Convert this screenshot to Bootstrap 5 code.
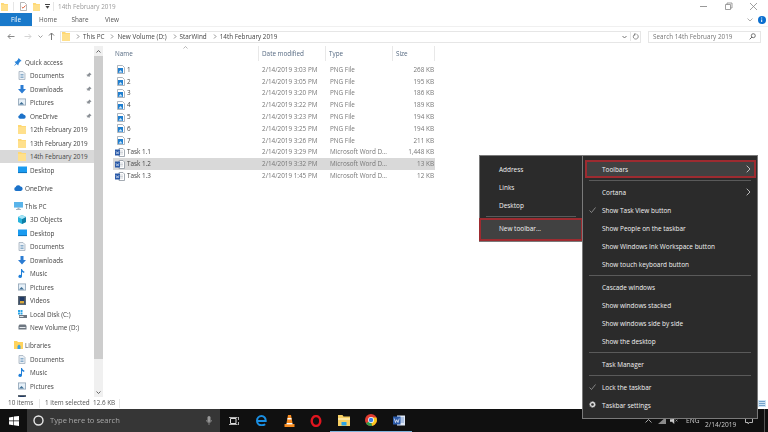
<!DOCTYPE html>
<html lang="en">
<head>
  <meta charset="UTF-8">
  <meta name="viewport" content="width=device-width, initial-scale=1.0">
  <title>14th February 2019</title>
  <link href="https://cdn.jsdelivr.net/npm/bootstrap@5.3.3/dist/css/bootstrap.min.css" rel="stylesheet">
  <script src="https://cdn.jsdelivr.net/npm/bootstrap@5.3.3/dist/js/bootstrap.bundle.min.js" defer></script>
  <style>
    html, body { height: 100%; overflow: hidden; background: #fff; }
    body { font-family: "Open Sans", "Liberation Sans", sans-serif; font-size: 6.35px; line-height: 1; color: #444; white-space: nowrap; }
    svg { display: block; flex: none; }
    .screen { width: 768px; height: 432px; filter: blur(.4px); }

    .title-row { height: 13px; color: #9a9a9a; }
    .title-row span, .addr-box span, .status-row span { padding-top: 1px; }
    .title-row .win-ctl { width: 9px; height: 9px; }
    .tab-row { height: 13px; }
    .file-tab { width: 32px; background: #1979ca; color: #fff; padding-top: 1px; }
    .rib-tab { width: 32px; color: #555; padding-top: 1px; }
    .tool-row { height: 20px; border-top: 1px solid #f0f0f0; }
    .addr-box { height: 12px; border: 1px solid #e6e6e6; color: #444; }
    .addr-main { width: 581px; margin-left: 60px; }
    .addr-main .crumb-sep { width: 4px; height: 5px; margin: 0 3px 0 6px; }
    .search-box { width: 113px; margin-left: 7px; color: #777; padding-left: 4px; }

    .body-row { height: 351px; }
    .nav-pane { width: 94px; padding-top: 9.25px; }
    .nav-item-row { height: 13.5px; padding-left: 30px; padding-top: 1.5px; color: #444; }
    .nav-item-row.head { padding-left: 25px; margin-top: 4.5px; }
    .nav-item-row.first { margin-top: 0; }
    .nav-item-row.sel { background: #d9d9d9; }
    .nav-item-row .ic { position: absolute; left: 18px; top: 2.5px; }
    .nav-item-row.head .ic { left: 14px; }
    .nav-item-row .pin { position: absolute; left: 86px; top: 3.5px; }
    .scroll-col { width: 9px; background: #f0f0f0; }
    .scroll-btn { height: 10px; }
    .scroll-thumb { height: 303px; background: #cdcdcd; }

    .files { padding-left: 10px; }
    .file-grid { display: grid; grid-template-columns: 146px 67px 67px 42px; width: 322px; }
    .file-head { height: 15px; margin-bottom: 3px; color: #566a82; }
    .file-head > div { display: flex; align-items: center; border-right: 1px solid #e8e8e8; padding-left: 3px; padding-top: 2px; }
    .file-head > div:first-child { padding-left: 2px; }
    .file-row { height: 11.8px; align-items: center; color: #777; }
    .file-row.sel { background: #d9d9d9; }
    .file-row .nm { color: #444; display: flex; align-items: center; gap: 2px; padding-left: 4px; }
    .file-row .nm.doc { padding-left: 2px; }
    .file-row .dt { padding-left: 3px; }
    .file-row .ty { padding-left: 4px; }
    .file-row .sz { text-align: right; padding-right: 1px; }
    .sort-mark { position: absolute; left: 80px; top: 0; }

    .status-row { height: 12px; color: #555; }
    .status-sep { width: 1px; height: 9px; background: #e6e6e6; }

    .taskbar { height: 23px; background: #101010; color: #d0d0d0; }
    .start-slot { width: 27px; }
    .task-search { width: 193px; background: #363636; padding: 0 8px 0 6px; color: #a8a8a8; font-size: 7.6px; }
    .task-slot { width: 27.4px; height: 100%; }
    .task-view { width: 28px; }
    .task-slot.open { border-bottom: 1px solid #7fb4dc; }
    .tray { margin-left: auto; }
    .clock-txt { font-size: 6.6px; color: #ccc; }

    .ctx-menu { position: absolute; top: 155px; background: #2b2b2b; border: 1px solid #7a7a7a; padding: 4px 0; color: #f2f2f2; font-size: 6.45px; }
    .ctx-right { left: 582px; width: 176px; }
    .ctx-left { left: 479px; width: 104px; height: 87px; }
    .ctx-row { height: 18px; padding-top: 2px; }
    .ctx-right .ctx-row { padding-left: 19px; }
    .ctx-left .ctx-row { padding-left: 19px; }
    .ctx-sep { height: 5px; display: flex; align-items: center; }
    .ctx-sep::after { content: ""; display: block; flex: 1; height: 1px; background: #5a5a5a; margin: 0 6px; }
    .ctx-hot { background: #414141; outline: 2px solid #9d2b30; outline-offset: -2px; }
    .ctx-right .ctx-hot { margin: 0 1px 0 2px; padding-left: 17px; }
    .ctx-left .ctx-hot { height: 23px; margin: -1px -1px 0 -1px; padding-left: 20px; padding-bottom: 3px; }
    .ctx-row .go { position: absolute; right: 5px; top: 5px; }
    .ctx-row .tick { position: absolute; left: 6px; top: 6px; }
  </style>
</head>
<body>
  <svg width="0" height="0" class="position-absolute">
    <defs>
      <symbol id="i-folder" viewBox="0 0 8 9"><path d="M0 0h3l1 1h4v8H0z" fill="#ffd873"/><path d="M0 2h8v7H0z" fill="#ffe08c"/></symbol>
      <symbol id="i-png" viewBox="0 0 8 9"><path d="M.5.5h5l2 2v6h-7z" fill="#fff" stroke="#9aa3ad" stroke-width=".8"/><path d="M1 3h5v5H1z" fill="#1f7fd0"/><path d="M1.5 7.5l2-2.5 2 2.5z" fill="#cfe6f7"/></symbol>
      <symbol id="i-word" viewBox="0 0 10 9"><path d="M4 .5h4l1.5 1.5v6.5H4z" fill="#fff" stroke="#8d96a0" stroke-width=".8"/><path d="M5 3h3M5 4.500h3M5 6h3" stroke="#b0b7bf" stroke-width=".6"/><path d="M0 1.500h5v6H0z" fill="#2b5aa8"/><path d="M1 3l.8 3 .7-2 .7 2L4 3" fill="none" stroke="#dfe8f6" stroke-width=".5"/></symbol>
      <symbol id="i-doc" viewBox="0 0 8 9"><path d="M1 .5h4l2 2v6H1z" fill="#e9eff5" stroke="#9aa8b6" stroke-width=".7"/><path d="M2.500 3.500h3M2.500 5h3M2.500 6.500h3" stroke="#5e8fb8" stroke-width=".7"/></symbol>
      <symbol id="i-down" viewBox="0 0 8 9"><path d="M2.500 0h3v4H8L4 8.500 0 4h2.500z" fill="#2b7cd3"/></symbol>
      <symbol id="i-pics" viewBox="0 0 8 7"><path d="M0 0h8v7H0z" fill="#8fa3b5"/><path d="M.8.800h6.400v5.400H.8z" fill="#e6f0f8"/><path d="M1 6l2.500-2.500L6 6z" fill="#3f6f95"/></symbol>
      <symbol id="i-cloud" viewBox="0 0 9 6"><path d="M2 6a2 2 0 0 1-.3-3.900A2.600 2.600 0 0 1 6.500 1.500 2.300 2.300 0 0 1 7 6z" fill="#1c72c9"/></symbol>
      <symbol id="i-desk" viewBox="0 0 9 7"><path d="M0 0h9v6.300H0z" fill="#1a9bf0"/><path d="M0 5.600h9v1H0z" fill="#0b6fb8"/></symbol>
      <symbol id="i-pc" viewBox="0 0 9 8"><path d="M0 0h9v5.600H0z" fill="#59b4ea"/><path d="M3.500 5.600h2V7h-2zM2 7h5v1H2z" fill="#a6b4c0"/></symbol>
      <symbol id="i-cube" viewBox="0 0 8 9"><path d="M4 0l4 2v5L4 9 0 7V2z" fill="#27b3dd"/><path d="M4 4l4-2v5L4 9z" fill="#0f7fa6"/><path d="M4 0l4 2-4 2-4-2z" fill="#a8e4f5"/></symbol>
      <symbol id="i-note" viewBox="0 0 7 9"><path d="M3 0h1c.3 1.500 1.500 2 2.500 2.800L6 4 4 3v4.500A1.800 1.500 0 1 1 3 6.100z" fill="#1f7fd8"/></symbol>
      <symbol id="i-video" viewBox="0 0 8 9"><path d="M0 0h8v9H0z" fill="#5a6672"/><path d="M1.500 1h5v7h-5z" fill="#203a66"/><path d="M2 5h4v2.500H2z" fill="#d9a93c"/></symbol>
      <symbol id="i-diskc" viewBox="0 0 9 8"><path d="M1 5h8v3H1z" fill="#6d7680"/><path d="M1.500 6h4v1h-4z" fill="#dfe5ea"/><path d="M0 0h2v2H0zM2.500 0h2v2h-2zM0 2.500h2v2H0zM2.500 2.500h2v2h-2z" fill="#2aa3e6"/></symbol>
      <symbol id="i-diskd" viewBox="0 0 9 5"><path d="M.5 1.500L1.500 0h6l1 1.500V5h-8z" fill="#6d7680"/><path d="M1.500 2.500h6v1h-6z" fill="#e4e8ec"/></symbol>
      <symbol id="i-lib" viewBox="0 0 9 8"><path d="M0 0h3l1 1h5v7H0z" fill="#ffd35c"/><path d="M3.500 8V5L5 3.500 6.500 5v3z" fill="#3aa0e4"/></symbol>
      <symbol id="i-star" viewBox="0 0 8 8"><path d="M4.600 0l3 3-1.500.6L4.800 5.500l-.6 2L2.600 6 .6 7.800l-.4-.3L2 5.400.5 3.800l2-.6L4 1.500z" fill="#2a83d8"/></symbol>
      <symbol id="i-pin" viewBox="0 0 6 6"><path d="M3.500.5l2 2-1 .4-1 1 .1 1-.6.1-1-1L.5 5.500l1-1.500-1-1 .2-.5 1 .1 1-1z" fill="#8a8f95"/></symbol>
      <symbol id="i-chev" viewBox="0 0 4 5"><path d="M1 .5l2 2-2 2" fill="none" stroke="#777" stroke-width=".8"/></symbol>
    </defs>
  </svg>

  <div class="screen d-flex flex-column position-relative overflow-hidden">
    <div class="title-row d-flex align-items-center">
      <svg width="7" height="8" style="margin-left:1px"><use href="#i-folder"/></svg>
      <div class="status-sep" style="margin-left:5px"></div>
      <svg width="9" height="9" viewBox="0 0 9 9" style="margin-left:5px"><path d="M1.500.5h4l2 2v6h-6z" fill="#fff" stroke="#9a9a9a" stroke-width=".7"/><path d="M2.800 5l1.200 1.200L6.500 3.500" fill="none" stroke="#d9532c" stroke-width=".9"/></svg>
      <svg width="7" height="8" style="margin-left:5px"><use href="#i-folder"/></svg>
      <svg width="5" height="5" viewBox="0 0 5 5" style="margin-left:5px"><path d="M0 0h5v1H0zM.5 2h4L2.500 4.800z" fill="#444"/></svg>
      <div class="status-sep" style="margin-left:3px"></div>
      <span style="margin-left:4px">14th February 2019</span>
      <svg class="ms-auto" width="7" height="1" viewBox="0 0 7 1"><path d="M0 .5h7" stroke="#999"/></svg>
      <svg class="win-ctl" viewBox="0 0 9 9" style="margin-left:17px"><path d="M1.500 2.500h5v5h-5zM3 2.500V1h5v5H6.500" fill="none" stroke="#888" stroke-width=".8"/></svg>
      <svg class="win-ctl" viewBox="0 0 9 9" style="margin-left:16px;margin-right:10px"><path d="M1 1l7 7M8 1L1 8" stroke="#888" stroke-width=".8"/></svg>
    </div>

    <div class="tab-row d-flex align-items-stretch">
      <div class="file-tab d-flex align-items-center justify-content-center">File</div>
      <div class="rib-tab d-flex align-items-center justify-content-center">Home</div>
      <div class="rib-tab d-flex align-items-center justify-content-center">Share</div>
      <div class="rib-tab d-flex align-items-center justify-content-center">View</div>
      <div class="ms-auto d-flex align-items-center">
        <svg width="6" height="4" viewBox="0 0 6 4"><path d="M.5.500L3 3 5.500.5" fill="none" stroke="#999" stroke-width=".8"/></svg>
        <svg width="8" height="8" viewBox="0 0 8 8" style="margin-left:5px;margin-right:2px"><circle cx="4" cy="4" r="4" fill="#0b6fd0"/><path d="M3.700 3.500v2.500M3.700 1.500v1" stroke="#fff" stroke-width="1"/></svg>
      </div>
    </div>

    <div class="tool-row d-flex align-items-center position-relative">
      <svg class="position-absolute" style="left:7px;top:6px" width="8" height="7" viewBox="0 0 8 7"><path d="M7.500 3.500H1M3.500 1L1 3.500 3.500 6" fill="none" stroke="#888" stroke-width="1"/></svg>
      <svg class="position-absolute" style="left:24px;top:6px" width="8" height="7" viewBox="0 0 8 7"><path d="M.5 3.500H7M4.500 1L7 3.500 4.500 6" fill="none" stroke="#d4d4d4" stroke-width="1"/></svg>
      <svg class="position-absolute" style="left:38px;top:8px" width="5" height="3" viewBox="0 0 5 3"><path d="M.5.500l2 2 2-2" fill="none" stroke="#888" stroke-width=".8"/></svg>
      <svg class="position-absolute" style="left:48px;top:5px" width="7" height="8" viewBox="0 0 7 8"><path d="M3.500 8V1M1 3.500L3.500 1 6 3.500" fill="none" stroke="#777" stroke-width="1"/></svg>
      <div class="addr-box addr-main d-flex align-items-center position-relative">
        <svg style="margin-left:1px" width="8" height="9"><use href="#i-folder"/></svg>
        <svg class="crumb-sep"><use href="#i-chev"/></svg><span>This PC</span>
        <svg class="crumb-sep"><use href="#i-chev"/></svg><span>New Volume (D:)</span>
        <svg class="crumb-sep"><use href="#i-chev"/></svg><span>StarWind</span>
        <svg class="crumb-sep"><use href="#i-chev"/></svg><span>14th February 2019</span>
        <svg class="ms-auto" width="5" height="4" viewBox="0 0 5 4" style="margin-right:3px"><path d="M.5 1l2 2 2-2" fill="none" stroke="#666" stroke-width=".9"/></svg>
        <div class="status-sep"></div>
        <svg width="7" height="7" viewBox="0 0 7 7" style="margin:0 1px"><path d="M3 1.200a2.500 2.500 0 1 0 1.500 0M3 0v2.200h-1" fill="none" stroke="#777" stroke-width=".8"/></svg>
      </div>
      <div class="addr-box search-box d-flex align-items-center">
        <span>Search 14th February 2019</span>
        <svg class="ms-auto" width="7" height="7" viewBox="0 0 7 7" style="margin-right:4px"><circle cx="4.300" cy="2.700" r="2" fill="none" stroke="#666" stroke-width=".9"/><path d="M3 4L.7 6.300" stroke="#666" stroke-width="1"/></svg>
      </div>
    </div>

    <div class="body-row d-flex">
      <div class="nav-pane overflow-hidden">
        <div class="nav-item-row head first d-flex align-items-center position-relative"><svg class="ic" width="8" height="8"><use href="#i-star"/></svg>Quick access</div>
        <div class="nav-item-row d-flex align-items-center position-relative"><svg class="ic" width="8" height="9"><use href="#i-doc"/></svg>Documents<svg class="pin" width="6" height="6"><use href="#i-pin"/></svg></div>
        <div class="nav-item-row d-flex align-items-center position-relative"><svg class="ic" width="8" height="9"><use href="#i-down"/></svg>Downloads<svg class="pin" width="6" height="6"><use href="#i-pin"/></svg></div>
        <div class="nav-item-row d-flex align-items-center position-relative"><svg class="ic" width="8" height="8"><use href="#i-pics"/></svg>Pictures<svg class="pin" width="6" height="6"><use href="#i-pin"/></svg></div>
        <div class="nav-item-row d-flex align-items-center position-relative"><svg class="ic" width="8" height="8"><use href="#i-cloud"/></svg>OneDrive<svg class="pin" width="6" height="6"><use href="#i-pin"/></svg></div>
        <div class="nav-item-row d-flex align-items-center position-relative"><svg class="ic" width="8" height="9"><use href="#i-folder"/></svg>12th February 2019</div>
        <div class="nav-item-row d-flex align-items-center position-relative"><svg class="ic" width="8" height="9"><use href="#i-folder"/></svg>13th February 2019</div>
        <div class="nav-item-row sel d-flex align-items-center position-relative"><svg class="ic" width="8" height="9"><use href="#i-folder"/></svg>14th February 2019</div>
        <div class="nav-item-row d-flex align-items-center position-relative"><svg class="ic" width="9" height="8"><use href="#i-desk"/></svg>Desktop</div>
        <div class="nav-item-row head d-flex align-items-center position-relative"><svg class="ic" width="9" height="8"><use href="#i-cloud"/></svg>OneDrive</div>
        <div class="nav-item-row head d-flex align-items-center position-relative"><svg class="ic" width="9" height="8"><use href="#i-pc"/></svg>This PC</div>
        <div class="nav-item-row d-flex align-items-center position-relative"><svg class="ic" width="8" height="9"><use href="#i-cube"/></svg>3D Objects</div>
        <div class="nav-item-row d-flex align-items-center position-relative"><svg class="ic" width="9" height="8"><use href="#i-desk"/></svg>Desktop</div>
        <div class="nav-item-row d-flex align-items-center position-relative"><svg class="ic" width="8" height="9"><use href="#i-doc"/></svg>Documents</div>
        <div class="nav-item-row d-flex align-items-center position-relative"><svg class="ic" width="8" height="9"><use href="#i-down"/></svg>Downloads</div>
        <div class="nav-item-row d-flex align-items-center position-relative"><svg class="ic" width="7" height="9"><use href="#i-note"/></svg>Music</div>
        <div class="nav-item-row d-flex align-items-center position-relative"><svg class="ic" width="8" height="8"><use href="#i-pics"/></svg>Pictures</div>
        <div class="nav-item-row d-flex align-items-center position-relative"><svg class="ic" width="8" height="9"><use href="#i-video"/></svg>Videos</div>
        <div class="nav-item-row d-flex align-items-center position-relative"><svg class="ic" width="9" height="8"><use href="#i-diskc"/></svg>Local Disk (C:)</div>
        <div class="nav-item-row d-flex align-items-center position-relative"><svg class="ic" width="9" height="8"><use href="#i-diskd"/></svg>New Volume (D:)</div>
        <div class="nav-item-row head d-flex align-items-center position-relative"><svg class="ic" width="9" height="8"><use href="#i-lib"/></svg>Libraries</div>
        <div class="nav-item-row d-flex align-items-center position-relative"><svg class="ic" width="8" height="9"><use href="#i-doc"/></svg>Documents</div>
        <div class="nav-item-row d-flex align-items-center position-relative"><svg class="ic" width="7" height="9"><use href="#i-note"/></svg>Music</div>
        <div class="nav-item-row d-flex align-items-center position-relative"><svg class="ic" width="8" height="8"><use href="#i-pics"/></svg>Pictures</div>
        <div class="nav-item-row d-flex align-items-center position-relative"><svg class="ic" width="8" height="9"><use href="#i-video"/></svg></div>
      </div>

      <div class="scroll-col d-flex flex-column">
        <div class="scroll-btn d-flex align-items-center justify-content-center"><svg width="5" height="3" viewBox="0 0 5 3"><path d="M.5 2.500l2-2 2 2" fill="none" stroke="#555" stroke-width=".9"/></svg></div>
        <div class="scroll-thumb"></div>
        <div class="scroll-btn mt-auto d-flex align-items-center justify-content-center"><svg width="5" height="3" viewBox="0 0 5 3"><path d="M.5.500l2 2 2-2" fill="none" stroke="#555" stroke-width=".9"/></svg></div>
      </div>

      <div class="files position-relative">
        <svg class="sort-mark" width="5" height="3" viewBox="0 0 5 3"><path d="M.5 2.500l2-2 2 2" fill="none" stroke="#999" stroke-width=".7"/></svg>
        <div class="file-grid file-head">
          <div>Name</div><div>Date modified</div><div>Type</div><div>Size</div>
        </div>
        <div class="file-grid file-row"><div class="nm"><svg width="8" height="9"><use href="#i-png"/></svg>1</div><div class="dt">2/14/2019 3:03 PM</div><div class="ty">PNG File</div><div class="sz">268 KB</div></div>
        <div class="file-grid file-row"><div class="nm"><svg width="8" height="9"><use href="#i-png"/></svg>2</div><div class="dt">2/14/2019 3:05 PM</div><div class="ty">PNG File</div><div class="sz">195 KB</div></div>
        <div class="file-grid file-row"><div class="nm"><svg width="8" height="9"><use href="#i-png"/></svg>3</div><div class="dt">2/14/2019 3:20 PM</div><div class="ty">PNG File</div><div class="sz">186 KB</div></div>
        <div class="file-grid file-row"><div class="nm"><svg width="8" height="9"><use href="#i-png"/></svg>4</div><div class="dt">2/14/2019 3:22 PM</div><div class="ty">PNG File</div><div class="sz">189 KB</div></div>
        <div class="file-grid file-row"><div class="nm"><svg width="8" height="9"><use href="#i-png"/></svg>5</div><div class="dt">2/14/2019 3:23 PM</div><div class="ty">PNG File</div><div class="sz">194 KB</div></div>
        <div class="file-grid file-row"><div class="nm"><svg width="8" height="9"><use href="#i-png"/></svg>6</div><div class="dt">2/14/2019 3:25 PM</div><div class="ty">PNG File</div><div class="sz">194 KB</div></div>
        <div class="file-grid file-row"><div class="nm"><svg width="8" height="9"><use href="#i-png"/></svg>7</div><div class="dt">2/14/2019 3:26 PM</div><div class="ty">PNG File</div><div class="sz">211 KB</div></div>
        <div class="file-grid file-row"><div class="nm doc"><svg width="10" height="9"><use href="#i-word"/></svg>Task 1.1</div><div class="dt">2/14/2019 3:29 PM</div><div class="ty">Microsoft Word D...</div><div class="sz">1,448 KB</div></div>
        <div class="file-grid file-row sel"><div class="nm doc"><svg width="10" height="9"><use href="#i-word"/></svg>Task 1.2</div><div class="dt">2/14/2019 3:32 PM</div><div class="ty">Microsoft Word D...</div><div class="sz">13 KB</div></div>
        <div class="file-grid file-row"><div class="nm doc"><svg width="10" height="9"><use href="#i-word"/></svg>Task 1.3</div><div class="dt">2/14/2019 1:45 PM</div><div class="ty">Microsoft Word D...</div><div class="sz">12 KB</div></div>
      </div>
    </div>

    <div class="status-row d-flex align-items-center">
      <span style="margin-left:8px;width:31px">10 items</span>
      <div class="status-sep"></div>
      <span style="margin-left:5px;width:48px">1 item selected</span>
      <span style="width:26px">12.6 KB</span>
      <div class="status-sep"></div>
      <svg class="ms-auto" width="8" height="7" viewBox="0 0 8 7" style="margin-right:2px"><path d="M0 0h8v7H0z" fill="#cfe3f3"/><path d="M1 1.500h6M1 3.500h6M1 5.500h6" stroke="#5e93bf" stroke-width=".8"/></svg>
    </div>

    <div class="taskbar d-flex align-items-stretch">
      <div class="start-slot d-flex align-items-center justify-content-center">
        <svg width="10" height="10" viewBox="0 0 10 10"><path d="M0 1.400l4.400-.7v3.900H0zM5 .6L10 0v4.600H5zM0 5.300h4.400v3.900L0 8.600zM5 5.300h5V10L5 9.300z" fill="#fff"/></svg>
      </div>
      <div class="task-search d-flex align-items-center">
        <svg width="11" height="11" viewBox="0 0 11 11"><circle cx="5.500" cy="5.500" r="4.500" fill="none" stroke="#e8e8e8" stroke-width="1.400"/></svg>
        <span style="margin-left:6px">Type here to search</span>
        <svg class="ms-auto" width="6" height="9" viewBox="0 0 6 9"><rect x="1.500" y="0" width="3" height="6" rx="1.500" fill="#999"/><path d="M.5 4a2.500 2.500 0 0 0 5 0M3 6.500V9" fill="none" stroke="#999" stroke-width=".7"/></svg>
      </div>
      <div class="task-view d-flex align-items-center justify-content-center">
        <svg width="10" height="8" viewBox="0 0 10 8"><path d="M1.500 1.500h5.500v5H1.500z" fill="none" stroke="#ddd"/><path d="M0 .5h8.500M0 7.500h8.500M9.500 0v3M9.500 5v3" stroke="#ddd" stroke-width=".8"/></svg>
      </div>
      <div class="task-slot d-flex align-items-center justify-content-center">
        <svg width="11" height="11" viewBox="0 0 11 11"><path d="M1.500 6h8.200C9.800 3 8 1 5.500 1 3 1 1 3 1 5.800 1 8.500 3 10.300 5.700 10.300c1.300 0 2.500-.3 3.500-1" fill="none" stroke="#1a8fe3" stroke-width="2"/></svg>
      </div>
      <div class="task-slot d-flex align-items-center justify-content-center">
        <svg width="11" height="12" viewBox="0 0 11 12"><path d="M4 0h3l1.500 8h-6z" fill="#f58a1f"/><path d="M3.600 3h3.800l.3 1.500H3.300z" fill="#fff"/><path d="M.5 9h10v3H.5z" fill="#f58a1f"/><path d="M2.500 8h6v1.400h-6z" fill="#fff"/></svg>
      </div>
      <div class="task-slot d-flex align-items-center justify-content-center">
        <svg width="12" height="12" viewBox="0 0 12 12"><ellipse cx="6" cy="6" rx="4.300" ry="4.900" fill="none" stroke="#e0151f" stroke-width="2.400"/></svg>
      </div>
      <div class="task-slot open d-flex align-items-center justify-content-center">
        <svg width="12" height="11" viewBox="0 0 12 11"><path d="M0 0h4.500l1 1.500H12V11H0z" fill="#f7cf62"/><path d="M0 3h12v2H0z" fill="#ffe79f"/><path d="M3.500 7h5v3.500h-5z" fill="#2aa3e6"/></svg>
      </div>
      <div class="task-slot open d-flex align-items-center justify-content-center">
        <svg width="12" height="12" viewBox="0 0 12 12"><circle cx="6" cy="6" r="6" fill="#e23c30"/><path d="M6 6L1 9.400A6 6 0 0 0 7 11.900z" fill="#2f9e4b"/><path d="M6 3.600h5.400A6 6 0 0 1 7 11.900z" fill="#f8c81d"/><circle cx="6" cy="6" r="2.900" fill="#fff"/><circle cx="6" cy="6" r="2.200" fill="#3a7fe6"/></svg>
      </div>
      <div class="task-slot open d-flex align-items-center justify-content-center">
        <svg width="12" height="11" viewBox="0 0 12 11"><path d="M4 .5h8v10H4z" fill="#dfe8f6"/><path d="M7 3h4M7 5h4M7 7h4" stroke="#5d86c6" stroke-width=".8"/><path d="M0 1.500h7.500v8H0z" fill="#2b5aa8"/><path d="M1.300 3.500L2.500 7.500l1.200-2.800L5 7.500l1.200-4" fill="none" stroke="#fff" stroke-width=".7"/></svg>
      </div>
      <div class="tray d-flex align-items-center">
        <svg width="7" height="4" viewBox="0 0 7 4"><path d="M.5 3.500l3-3 3 3" fill="none" stroke="#ccc" stroke-width=".8"/></svg>
        <svg width="8" height="7" viewBox="0 0 8 7" style="margin-left:6.500px"><path d="M0 7L8 0v7z" fill="#8a8a8a"/></svg>
        <svg width="8" height="7" viewBox="0 0 8 7" style="margin-left:4px"><path d="M0 2.500h2L4 .5v6L2 4.500H0zM5.500 2.500l2 2M7.500 2.500l-2 2" fill="#ccc" stroke="#ccc" stroke-width=".5"/></svg>
        <span class="clock-txt" style="margin-left:8px;width:19px;margin-top:1px">ENG</span>
        <span class="clock-txt" style="width:40px;margin-top:9px">2/14/2019</span>
        <svg width="8" height="7" viewBox="0 0 8 7"><path d="M.5.500h7v5H4.500L3 6.700V5.500H.5z" fill="none" stroke="#ddd" stroke-width=".8"/></svg>
        <div style="width:11px"></div>
        <div style="width:1px;height:100%;background:#555"></div>
        <div style="width:3px"></div>
      </div>
    </div>

    <div class="ctx-menu ctx-left">
      <div class="ctx-row d-flex align-items-center">Address</div>
      <div class="ctx-row d-flex align-items-center">Links</div>
      <div class="ctx-row d-flex align-items-center">Desktop</div>
      <div class="ctx-sep"></div>
      <div class="ctx-row ctx-hot d-flex align-items-center">New toolbar...</div>
    </div>

    <div class="ctx-menu ctx-right">
      <div class="ctx-row ctx-hot d-flex align-items-center position-relative">Toolbars
        <svg class="go" width="5" height="8" viewBox="0 0 5 8"><path d="M.7.700L4 4 .7 7.300" fill="none" stroke="#ddd" stroke-width=".8"/></svg>
      </div>
      <div class="ctx-sep"></div>
      <div class="ctx-row d-flex align-items-center position-relative">Cortana
        <svg class="go" width="5" height="8" viewBox="0 0 5 8" style="right:6px"><path d="M.7.700L4 4 .7 7.300" fill="none" stroke="#ddd" stroke-width=".8"/></svg>
      </div>
      <div class="ctx-row d-flex align-items-center position-relative"><svg class="tick" width="7" height="6" viewBox="0 0 7 6"><path d="M.5 3.500l2 2L6.500.5" fill="none" stroke="#aaa" stroke-width=".7"/></svg>Show Task View button</div>
      <div class="ctx-row d-flex align-items-center">Show People on the taskbar</div>
      <div class="ctx-row d-flex align-items-center">Show Windows Ink Workspace button</div>
      <div class="ctx-row d-flex align-items-center">Show touch keyboard button</div>
      <div class="ctx-sep"></div>
      <div class="ctx-row d-flex align-items-center">Cascade windows</div>
      <div class="ctx-row d-flex align-items-center">Show windows stacked</div>
      <div class="ctx-row d-flex align-items-center">Show windows side by side</div>
      <div class="ctx-row d-flex align-items-center">Show the desktop</div>
      <div class="ctx-sep"></div>
      <div class="ctx-row d-flex align-items-center">Task Manager</div>
      <div class="ctx-sep"></div>
      <div class="ctx-row d-flex align-items-center position-relative"><svg class="tick" width="7" height="6" viewBox="0 0 7 6"><path d="M.5 3.500l2 2L6.500.5" fill="none" stroke="#aaa" stroke-width=".7"/></svg>Lock the taskbar</div>
      <div class="ctx-row d-flex align-items-center position-relative"><svg class="tick" style="top:5px" width="7" height="7" viewBox="0 0 7 7"><circle cx="3.500" cy="3.500" r="2" fill="none" stroke="#ddd" stroke-width="1.300"/><circle cx="3.500" cy="3.500" r="3" fill="none" stroke="#ddd" stroke-width=".8" stroke-dasharray="1 1.300"/></svg>Taskbar settings</div>
    </div>
  </div>
</body>
</html>
